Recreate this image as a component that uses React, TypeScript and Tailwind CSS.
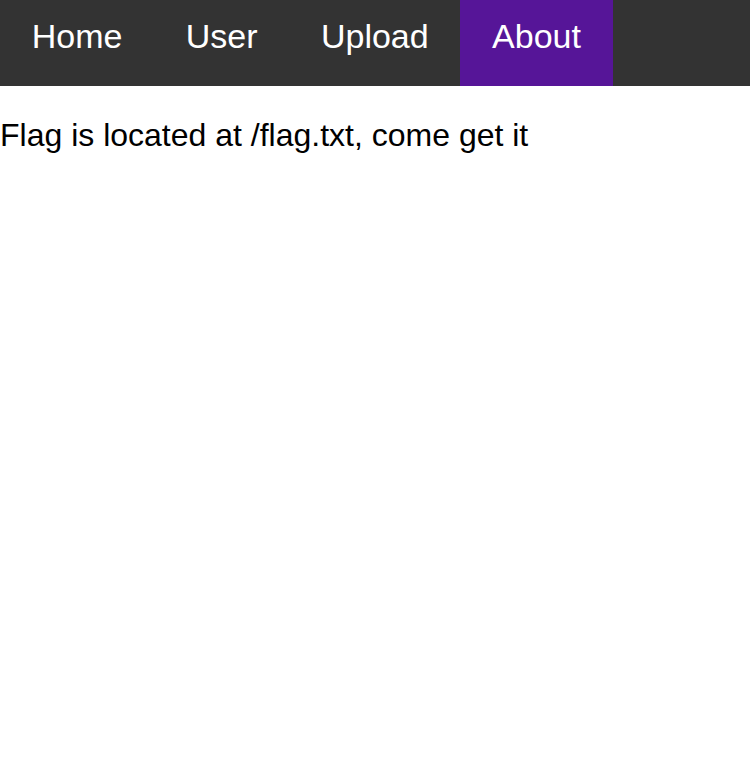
const links = ['Home', 'User', 'Upload', 'About'];

export default function App() {
    return (
        <div className="min-h-screen bg-white font-['Liberation_Sans',Arial,sans-serif]">
            {/* Top navigation */}
            <nav className="flex h-[86px] bg-[#333333]">
                {links.map((label) => (
                    <a
                        key={label}
                        href="#"
                        className={`block px-[31.7px] pt-[11px] text-[34px] text-white ${
                            label === 'About' ? 'bg-[#561598]' : ''
                        }`}
                    >
                        {label}
                    </a>
                ))}
            </nav>

            <p className="mt-[25px] text-[32px] text-black">Flag is located at /flag.txt, come get it</p>
        </div>
    );
}
